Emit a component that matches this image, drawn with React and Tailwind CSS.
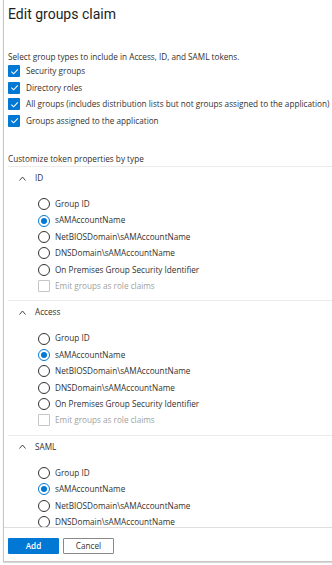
import { useState } from 'react'

const font = { fontFamily: '"Open Sans", "Noto Sans", "Liberation Sans", sans-serif' }

const groupTypes = [
  'Security groups',
  'Directory roles',
  'All groups (includes distribution lists but not groups assigned to the application)',
  'Groups assigned to the application',
]

const attributes = [
  'Group ID',
  'sAMAccountName',
  'NetBIOSDomain\\sAMAccountName',
  'DNSDomain\\sAMAccountName',
  'On Premises Group Security Identifier',
]

function CheckBox({ label }) {
  return (
    <div className="flex h-[16.5px] items-center gap-[6px]">
      <span className="flex h-[12px] w-[12px] shrink-0 items-center justify-center rounded-[1px] bg-[#0078d4]">
        <svg width="9" height="9" viewBox="0 0 10 10" fill="none">
          <path d="M1.5 5.2 L4 7.6 L8.7 2.6" stroke="#fff" strokeWidth="1.2" />
        </svg>
      </span>
      <span className="whitespace-nowrap">{label}</span>
    </div>
  )
}

function Radio({ label, checked }) {
  return (
    <div className="flex h-[16.4px] items-center gap-[5px]">
      <span
        className={`flex h-[12px] w-[12px] shrink-0 items-center justify-center rounded-full border ${checked ? 'border-[#0078d4]' : 'border-[#323130]'}`}
      >
        {checked && <span className="h-[6px] w-[6px] rounded-full bg-[#0078d4]" />}
      </span>
      <span className="whitespace-nowrap">{label}</span>
    </div>
  )
}

function Section({ title, selected }) {
  const [value] = useState(selected)
  return (
    <div className="ml-[4px] border-b border-[#edebe9] pb-[6px]">
      <div className="flex h-[22px] items-center">
        <svg width="7" height="5" viewBox="0 0 7 5" className="ml-[11px]" fill="none">
          <path d="M0.5 4.5 L3.5 1 L6.5 4.5" stroke="#323130" strokeWidth="0.9" />
        </svg>
        <span className="ml-[9px]">{title}</span>
      </div>
      <div className="pl-[30px] pt-[7px]">
        {attributes.map((a) => (
          <Radio key={a} label={a} checked={a === value} />
        ))}
        <div className="flex h-[16.4px] items-center gap-[5px] text-[#a19f9d]">
          <span className="h-[12px] w-[12px] shrink-0 rounded-[1px] border border-[#c8c6c4]" />
          <span>Emit groups as role claims</span>
        </div>
      </div>
    </div>
  )
}

export default function App() {
  return (
    <div className="h-[565px] w-[332px] bg-white text-[8.2px] text-[#323130]" style={font}>
      <div className="ml-[3px] flex h-[562px] flex-col border-b border-l border-[#c8c6c4] shadow-[0_1px_1px_rgba(0,0,0,0.15)]">
        <div className="flex-1 overflow-hidden">
          <h1
            className="pl-[4px] text-[14px] leading-[28px] text-[#201f1e]"
            style={{ fontFamily: 'Roboto, "Open Sans", sans-serif' }}
          >
            Edit groups claim
          </h1>
          <p className="mt-[23px] pl-[4px] leading-[12px]">Select group types to include in Access, ID, and SAML tokens.</p>
          <div className="pl-[4px]">
            {groupTypes.map((g) => (
              <CheckBox key={g} label={g} />
            ))}
          </div>
          <div className="ml-[4px] mt-[23px] border-b border-[#edebe9] leading-[14px]">
            Customize token properties by type
          </div>
          <Section title="ID" selected="sAMAccountName" />
          <Section title="Access" selected="sAMAccountName" />
          <Section title="SAML" selected="sAMAccountName" />
        </div>
        <div className="flex gap-[4px] border-t border-[#e1dfdd] pb-[7px] pl-[4px] pt-[10px]">
          <button className="h-[16px] w-[51px] rounded-[1px] bg-[#0078d4] p-0 text-center text-[8.2px] font-semibold leading-[16px] text-white">
            Add
          </button>
          <button className="h-[16px] w-[51px] rounded-[1px] border border-[#8a8886] bg-white p-0 text-center text-[8.2px] leading-[14px] text-[#323130]">
            Cancel
          </button>
        </div>
      </div>
    </div>
  )
}
